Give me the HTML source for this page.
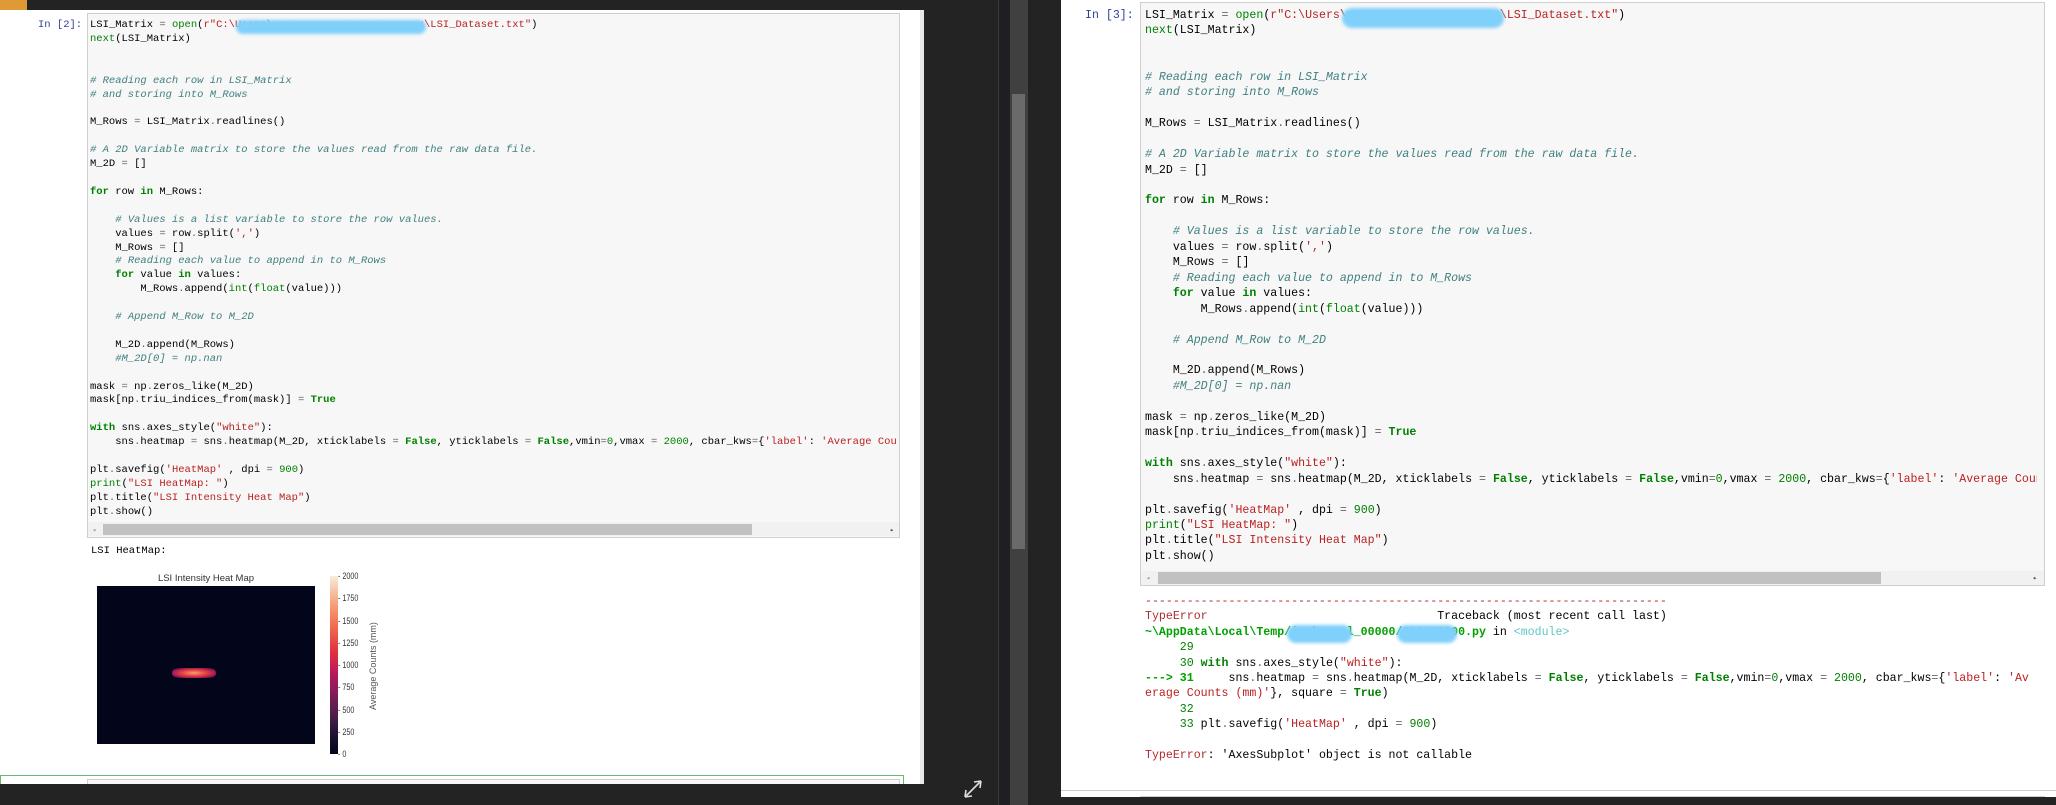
<!DOCTYPE html>
<html><head><meta charset="utf-8"><style>
*{margin:0;padding:0;box-sizing:border-box}
body{width:2056px;height:805px;background:#232323;position:relative;overflow:hidden;font-family:"Liberation Mono",monospace}
.abs{position:absolute}
.clip{position:absolute;overflow:hidden}
pre{position:absolute;font-family:"Liberation Mono",monospace;white-space:pre;color:#000}
.L{font-size:10.5px;line-height:13.9px}
.R{font-size:11.6px;line-height:15.45px}
.k{color:#008000;font-weight:bold}
.b{color:#008000}
.s{color:#ba2121}
.c{color:#408080;font-style:italic}
.n{color:#008000}
.o{color:#666}
.p{color:#303f9f}
.e{color:#b22b31}
.g{color:#00a000;font-weight:bold}
.cy{color:#60c6c8}
.blob{position:absolute;background:#7fd0fb;border-radius:12px;filter:blur(1.5px)}
.tick{position:absolute;font-family:"Liberation Sans",sans-serif;font-size:9px;color:#333;transform:scaleX(.8);transform-origin:left}
</style></head><body>
<!-- left panel -->
<div class="abs" style="left:0;top:0;width:27px;height:10px;background:#e09a35"></div>
<div class="abs" style="left:0;top:10px;width:924px;height:774px;background:#fff"></div>
<div class="abs" style="left:920px;top:10px;width:4px;height:774px;background:#e8e8e8"></div>
<div class="abs" style="left:87px;top:13px;width:813px;height:525px;background:#f7f7f7;border:1px solid #cfcfcf"></div>
<pre class="L p" style="left:38px;top:19px">In [2]:</pre>
<div class="clip" style="left:88px;top:14px;width:808px;height:508px">
<pre class="L" style="left:2px;top:5px">LSI_Matrix <span class="o">=</span> <span class="b">open</span>(<span class="s">r"C:\Users\xxxxxxxxxxxxxxxxxxxxxxxx\LSI_Dataset.txt"</span>)
<span class="b">next</span>(LSI_Matrix)


<span class="c"># Reading each row in LSI_Matrix</span>
<span class="c"># and storing into M_Rows</span>

M_Rows <span class="o">=</span> LSI_Matrix<span class="o">.</span>readlines()

<span class="c"># A 2D Variable matrix to store the values read from the raw data file.</span>
M_2D <span class="o">=</span> []

<span class="k">for</span> row <span class="k">in</span> M_Rows:

    <span class="c"># Values is a list variable to store the row values.</span>
    values <span class="o">=</span> row<span class="o">.</span>split(<span class="s">','</span>)
    M_Rows <span class="o">=</span> []
    <span class="c"># Reading each value to append in to M_Rows</span>
    <span class="k">for</span> value <span class="k">in</span> values:
        M_Rows<span class="o">.</span>append(<span class="b">int</span>(<span class="b">float</span>(value)))

    <span class="c"># Append M_Row to M_2D</span>

    M_2D<span class="o">.</span>append(M_Rows)
    <span class="c">#M_2D[0] = np.nan</span>

mask <span class="o">=</span> np<span class="o">.</span>zeros_like(M_2D)
mask[np<span class="o">.</span>triu_indices_from(mask)] <span class="o">=</span> <span class="k">True</span>

<span class="k">with</span> sns<span class="o">.</span>axes_style(<span class="s">"white"</span>):
    sns<span class="o">.</span>heatmap <span class="o">=</span> sns<span class="o">.</span>heatmap(M_2D, xticklabels <span class="o">=</span> <span class="k">False</span>, yticklabels <span class="o">=</span> <span class="k">False</span>,vmin<span class="o">=</span><span class="n">0</span>,vmax <span class="o">=</span> <span class="n">2000</span>, cbar_kws<span class="o">=</span>{<span class="s">'label'</span>: <span class="s">'Average Counts (mm)'</span>}, square <span class="o">=</span> <span class="k">True</span>)

plt<span class="o">.</span>savefig(<span class="s">'HeatMap'</span> , dpi <span class="o">=</span> <span class="n">900</span>)
<span class="b">print</span>(<span class="s">"LSI HeatMap: "</span>)
plt<span class="o">.</span>title(<span class="s">"LSI Intensity Heat Map"</span>)
plt<span class="o">.</span>show()</pre>
</div>
<div class="blob" style="left:236px;top:20px;width:190px;height:14px"></div>
<div class="abs" style="left:88px;top:522px;width:811px;height:14px;background:#f1f1f1"></div>
<div class="abs" style="left:103px;top:524px;width:649px;height:11px;background:#c1c1c1"></div>
<div class="abs" style="left:92px;top:526px;font-size:7px;color:#999">◂</div>
<div class="abs" style="left:890px;top:526px;font-size:7px;color:#444">▸</div>
<pre class="L" style="left:91px;top:545px">LSI HeatMap:</pre>
<div class="abs" style="left:150px;top:573px;font-family:'Liberation Sans',sans-serif;font-size:9.5px;color:#333;width:112px;text-align:center">LSI Intensity Heat Map</div>
<div class="abs" style="left:97px;top:586px;width:218px;height:158px;background:#03051a"></div>
<div class="abs" style="left:172px;top:668px;width:44px;height:10px;border-radius:5px;background:radial-gradient(ellipse at center,#f6a070 0%,#e8403f 40%,#a11a5b 70%,rgba(60,15,60,.6) 88%,rgba(3,5,26,0) 100%)"></div>
<div class="abs" style="left:330px;top:576px;width:8px;height:178px;background:linear-gradient(to bottom,#faebdd,#f6a47c 15%,#f26c4f 28%,#e13342 42%,#b8175a 55%,#841e5a 65%,#4e1d4c 78%,#231436 88%,#03051a)"></div>
<div class="tick" style="left:338px;top:571px">‑ 2000</div>
<div class="tick" style="left:338px;top:593px">‑ 1750</div>
<div class="tick" style="left:338px;top:616px">‑ 1500</div>
<div class="tick" style="left:338px;top:638px">‑ 1250</div>
<div class="tick" style="left:338px;top:660px">‑ 1000</div>
<div class="tick" style="left:338px;top:682px">‑ 750</div>
<div class="tick" style="left:338px;top:705px">‑ 500</div>
<div class="tick" style="left:338px;top:727px">‑ 250</div>
<div class="tick" style="left:338px;top:749px">‑ 0</div>
<div class="abs" style="left:318px;top:661px;width:110px;font-family:'Liberation Sans',sans-serif;font-size:9px;color:#555;text-align:center;transform:rotate(-90deg)">Average Counts (mm)</div>
<div class="abs" style="left:0;top:775px;width:904px;height:9px;border:1px solid #66bb6a;border-bottom:none"></div>
<div class="abs" style="left:87px;top:779px;width:813px;height:5px;border:1px solid #cfcfcf;border-bottom:none;background:#f7f7f7"></div>
<!-- middle -->
<div class="abs" style="left:998px;top:0;width:1px;height:805px;background:#3a3a3a"></div>
<div class="abs" style="left:999px;top:0;width:11px;height:805px;background:#1e1f22"></div>
<div class="abs" style="left:1010px;top:0;width:18px;height:805px;background:#404040"></div>
<div class="abs" style="left:1012px;top:94px;width:13px;height:455px;background:#6a6a6a"></div>
<svg class="abs" style="left:962px;top:778px" width="22" height="22" viewBox="0 0 22 22"><path d="M3 19 L19 3 M19 3 L12 4 M19 3 L18 10 M3 19 L4 12 M3 19 L10 18" stroke="#ddd" stroke-width="1.6" fill="none"/></svg>
<!-- right panel -->
<div class="abs" style="left:1061px;top:0;width:995px;height:797px;background:#fff"></div>
<div class="abs" style="left:1140px;top:2px;width:905px;height:584px;background:#f7f7f7;border:1px solid #cfcfcf"></div>
<pre class="R p" style="left:1085px;top:8px">In [3]:</pre>
<div class="clip" style="left:1141px;top:3px;width:896px;height:567px">
<pre class="R" style="left:4px;top:5px">LSI_Matrix <span class="o">=</span> <span class="b">open</span>(<span class="s">r"C:\Users\xxxxxxxxxxxxxxxxxxxxxx\LSI_Dataset.txt"</span>)
<span class="b">next</span>(LSI_Matrix)


<span class="c"># Reading each row in LSI_Matrix</span>
<span class="c"># and storing into M_Rows</span>

M_Rows <span class="o">=</span> LSI_Matrix<span class="o">.</span>readlines()

<span class="c"># A 2D Variable matrix to store the values read from the raw data file.</span>
M_2D <span class="o">=</span> []

<span class="k">for</span> row <span class="k">in</span> M_Rows:

    <span class="c"># Values is a list variable to store the row values.</span>
    values <span class="o">=</span> row<span class="o">.</span>split(<span class="s">','</span>)
    M_Rows <span class="o">=</span> []
    <span class="c"># Reading each value to append in to M_Rows</span>
    <span class="k">for</span> value <span class="k">in</span> values:
        M_Rows<span class="o">.</span>append(<span class="b">int</span>(<span class="b">float</span>(value)))

    <span class="c"># Append M_Row to M_2D</span>

    M_2D<span class="o">.</span>append(M_Rows)
    <span class="c">#M_2D[0] = np.nan</span>

mask <span class="o">=</span> np<span class="o">.</span>zeros_like(M_2D)
mask[np<span class="o">.</span>triu_indices_from(mask)] <span class="o">=</span> <span class="k">True</span>

<span class="k">with</span> sns<span class="o">.</span>axes_style(<span class="s">"white"</span>):
    sns<span class="o">.</span>heatmap <span class="o">=</span> sns<span class="o">.</span>heatmap(M_2D, xticklabels <span class="o">=</span> <span class="k">False</span>, yticklabels <span class="o">=</span> <span class="k">False</span>,vmin<span class="o">=</span><span class="n">0</span>,vmax <span class="o">=</span> <span class="n">2000</span>, cbar_kws<span class="o">=</span>{<span class="s">'label'</span>: <span class="s">'Average Counts (mm)'</span>}, square <span class="o">=</span> <span class="k">True</span>)

plt<span class="o">.</span>savefig(<span class="s">'HeatMap'</span> , dpi <span class="o">=</span> <span class="n">900</span>)
<span class="b">print</span>(<span class="s">"LSI HeatMap: "</span>)
plt<span class="o">.</span>title(<span class="s">"LSI Intensity Heat Map"</span>)
plt<span class="o">.</span>show()</pre>
</div>
<div class="blob" style="left:1342px;top:8px;width:162px;height:20px"></div>
<div class="abs" style="left:1141px;top:571px;width:903px;height:14px;background:#f1f1f1"></div>
<div class="abs" style="left:1158px;top:572px;width:723px;height:12px;background:#c1c1c1"></div>
<div class="abs" style="left:1146px;top:574px;font-size:7px;color:#999">◂</div>
<div class="abs" style="left:2033px;top:574px;font-size:7px;color:#444">▸</div>
<pre class="R" style="left:1145px;top:594px;line-height:15.4px"><span class="e">---------------------------------------------------------------------------</span>
<span class="e">TypeError</span>                                 Traceback (most recent call last)
<span class="g">~\AppData\Local\Temp/ipykernel_00000/000000000.py</span> in <span class="cy">&lt;module&gt;</span>
<span class="n">     29</span> 
<span class="n">     30</span> <span class="k">with</span> sns<span class="o">.</span>axes_style(<span class="s">"white"</span>):
<span class="g">---&gt; 31</span>     sns<span class="o">.</span>heatmap <span class="o">=</span> sns<span class="o">.</span>heatmap(M_2D, xticklabels <span class="o">=</span> <span class="k">False</span>, yticklabels <span class="o">=</span> <span class="k">False</span>,vmin<span class="o">=</span><span class="n">0</span>,vmax <span class="o">=</span> <span class="n">2000</span>, cbar_kws<span class="o">=</span>{<span class="s">'label'</span>: <span class="s">'Av</span>
<span class="s">erage Counts (mm)'</span>}, square <span class="o">=</span> <span class="k">True</span>)
<span class="n">     32</span> 
<span class="n">     33</span> plt<span class="o">.</span>savefig(<span class="s">'HeatMap'</span> , dpi <span class="o">=</span> <span class="n">900</span>)

<span class="e">TypeError</span>: 'AxesSubplot' object is not callable</pre>
<div class="blob" style="left:1287px;top:625px;width:65px;height:18px"></div>
<div class="blob" style="left:1397px;top:625px;width:60px;height:18px"></div>
<div class="abs" style="left:1061px;top:790px;width:995px;height:1px;background:#cfcfcf"></div>
<div class="abs" style="left:1140px;top:796px;width:905px;height:1px;background:#cfcfcf"></div>
</body></html>
